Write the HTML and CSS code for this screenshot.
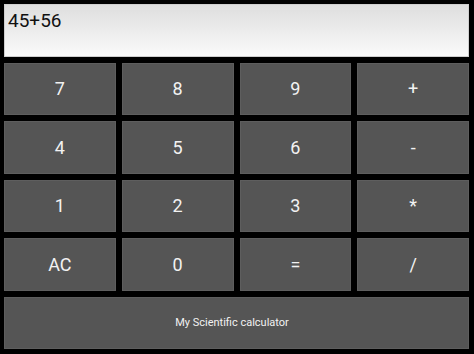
FILE: index.html
```html
<!DOCTYPE html>
<html>
<head>
<meta charset="utf-8">
<link rel="stylesheet" href="styles.css">
</head>
<body>
<div class="calc">
  <div class="display">45+56</div>
  <button class="key">7</button>
  <button class="key">8</button>
  <button class="key">9</button>
  <button class="key">+</button>
  <button class="key">4</button>
  <button class="key">5</button>
  <button class="key">6</button>
  <button class="key">-</button>
  <button class="key">1</button>
  <button class="key">2</button>
  <button class="key">3</button>
  <button class="key">*</button>
  <button class="key">AC</button>
  <button class="key">0</button>
  <button class="key">=</button>
  <button class="key">/</button>
  <button class="key title">My Scientific calculator</button>
</div>
</body>
</html>
```
FILE: styles.css
```css
html, body {
  margin: 0;
  padding: 0;
  background: #000;
  width: 474px;
  height: 354px;
  overflow: hidden;
}
.calc {
  box-sizing: border-box;
  width: 474px;
  height: 354px;
  padding: 4px 5px 5px 4px;
  display: grid;
  grid-template-columns: repeat(4, 1fr);
  grid-template-rows: repeat(6, 1fr);
  gap: 6px;
  font-family: Roboto, "Noto Sans", sans-serif;
}
.display {
  grid-column: 1 / -1;
  background: linear-gradient(#dedede, #fafafa);
  color: #111;
  font-size: 19px;
  line-height: 1;
  padding: 6px 3px;
  border: 1px solid #cfcfcf;
  box-sizing: border-box;
}
.key {
  background: #555;
  border: 1px solid #5e5e5e;
  color: #f2f2f2;
  font-family: Roboto, "Noto Sans", sans-serif;
  font-size: 18px;
  padding: 0;
  margin: 0;
  border-radius: 0;
}
.title {
  grid-column: 1 / -1;
  font-size: 11px;
  padding-right: 9px;
}
```
